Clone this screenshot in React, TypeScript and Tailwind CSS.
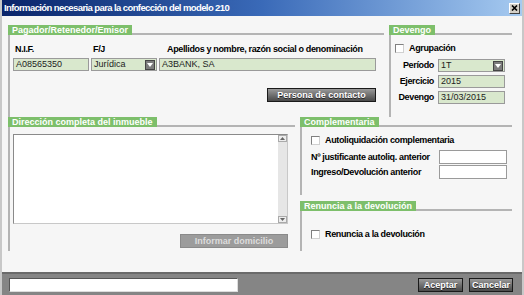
import React from 'react';

const F = "font-['Liberation_Sans',Arial,sans-serif]";
const LBL = 'font-bold text-[9px] tracking-[-0.35px] text-black whitespace-nowrap';

function Tab({ title }: { title: string }) {
  return (
    <div className="flex items-end h-[10px]">
      <div className="h-[10px] px-[4px] bg-[#7dbf6b] text-white font-bold text-[9px] leading-[10px] whitespace-nowrap">{title}</div>
      <div className="flex-1 border-b-2 border-[#b4b4b4]" />
    </div>
  );
}

function Check({ label }: { label: string }) {
  return (
    <div className="flex items-center gap-[5px] h-[12px]">
      <div className="w-[9px] h-[9px] bg-white border border-[#808080] border-r-[#d0d0d0] border-b-[#d0d0d0]" />
      <span className={`${LBL} leading-[10px]`}>{label}</span>
    </div>
  );
}

function Field({ value, w, white }: { value?: string; w?: string; white?: boolean }) {
  return (
    <div className={`${w ?? 'flex-1'} h-[13px] ${white ? 'bg-white' : 'bg-[#d9e8cd]'} border border-[#9a9a9a] px-[2px] font-normal tracking-normal text-[9px] leading-[11px] text-[#222] overflow-hidden whitespace-nowrap`}>
      {value}
    </div>
  );
}

function Combo({ value, w }: { value: string; w: string }) {
  return (
    <div className={`${w} h-[13px] bg-[#d9e8cd] border border-[#9a9a9a] flex items-center`}>
      <span className="flex-1 px-[2px] font-normal tracking-normal text-[9px] leading-[11px] text-[#222]">{value}</span>
      <div className="w-[10px] h-[10px] mr-[1px] bg-[#7c7c7c] border border-[#444] flex items-center justify-center">
        <svg width="6" height="4" viewBox="0 0 6 4"><path d="M0 0h6L3 4z" fill="#fff" /></svg>
      </div>
    </div>
  );
}

function DarkButton({ label, w }: { label: string; w: string }) {
  return (
    <div className={`${w} h-[14px] border border-[#1a1a1a] bg-linear-to-b from-[#9a9a9a] to-[#4a4a4a] flex items-center justify-center text-white font-bold text-[9px] leading-[10px] [text-shadow:0_1px_0_#222]`}>
      {label}
    </div>
  );
}

export default function App() {
  return (
    <div className={`${F} w-[524px] h-[295px] flex flex-col bg-[#f6f6f6] border-l-2 border-r-2 border-[#c8c8c8] overflow-hidden`}>
      {/* title bar */}
      <div className="h-[16px] shrink-0 flex items-center bg-linear-to-r from-[#0a246a] via-[#3a6ab8] to-[#a6caf0] pl-[2px] pr-[2px]">
        <span className="flex-1 text-white font-bold text-[9.5px] tracking-[-0.6px] leading-[12px] whitespace-nowrap">Información necesaria para la confección del modelo 210</span>
        <div className="w-[11px] h-[11px] bg-[#d4d0c8] border border-[#404040] border-t-white border-l-white flex items-center justify-center">
          <svg width="7" height="6" viewBox="0 0 7 6"><path d="M1 0.5l5 5M6 0.5l-5 5" stroke="#000" strokeWidth="1.6" /></svg>
        </div>
      </div>

      {/* body */}
      <div className="flex-1 flex flex-col pt-[9px] pl-[6px]">
        <div className="flex gap-[5px] h-[92px]">
          {/* Pagador */}
          <div className="w-[376px] flex flex-col">
            <Tab title="Pagador/Retenedor/Emisor" />
            <div className="flex-1 border-l-2 border-[#b4b4b4] pl-[3px] pr-[8px] pt-[9px] flex flex-col">
              <div className={`flex h-[10px] leading-[10px] ${LBL}`}>
                <span className="w-[80px] pl-[2px]">N.I.F.</span>
                <span className="w-[74px]">F/J</span>
                <span>Apellidos y nombre, razón social o denominación</span>
              </div>
              <div className="flex gap-[2px] mt-[4px]">
                <Field value="A08565350" w="w-[76px]" />
                <Combo value="Jurídica" w="w-[66px]" />
                <Field value="A3BANK, SA" />
              </div>
              <div className="flex justify-end mt-[17px]">
                <DarkButton label="Persona de contacto" w="w-[109px]" />
              </div>
            </div>
          </div>
          {/* Devengo */}
          <div className="w-[123px] flex flex-col">
            <Tab title="Devengo" />
            <div className="flex-1 border-l-2 border-[#b4b4b4] pl-[4px] pr-[7px] pt-[7px] flex flex-col">
              <Check label="Agrupación" />
              <div className={`grid grid-cols-[43px_1fr] gap-x-[4px] gap-y-[3px] mt-[5px] -ml-[4px] leading-[13px] ${LBL}`}>
                <span className="text-right">Período</span>
                <Combo value="1T" w="w-full" />
                <span className="text-right">Ejercicio</span>
                <Field value="2015" w="w-full" />
                <span className="text-right">Devengo</span>
                <Field value="31/03/2015" w="w-full" />
              </div>
            </div>
          </div>
        </div>

        <div className="flex gap-[5px] h-[134px]">
          {/* Dirección */}
          <div className="w-[287px] flex flex-col">
            <Tab title="Dirección completa del inmueble" />
            <div className="flex-1 border-l-2 border-[#b4b4b4] pl-[3px] pr-[7px] pt-[7px] flex flex-col">
              <div className="h-[90px] bg-white border border-[#8a8a8a] border-r-[#c8c8c8] border-b-[#c8c8c8] flex justify-end">
                <div className="w-[9px] bg-[#e6e6e6] flex flex-col justify-between">
                  <div className="h-[7px] bg-[#ededed] border border-[#aaa] flex items-center justify-center">
                    <svg width="5" height="3" viewBox="0 0 5 3"><path d="M0 3h5L2.5 0z" fill="#666" /></svg>
                  </div>
                  <div className="h-[7px] bg-[#ededed] border border-[#aaa] flex items-center justify-center">
                    <svg width="5" height="3" viewBox="0 0 5 3"><path d="M0 0h5L2.5 3z" fill="#666" /></svg>
                  </div>
                </div>
              </div>
              <div className="flex justify-end mt-[10px]">
                <div className="w-[108px] h-[14px] bg-[#9c9c9c] border border-[#8a8a8a] flex items-center justify-center text-[#dcdcdc] font-bold text-[9px] leading-[10px]">Informar domicilio</div>
              </div>
            </div>
          </div>
          {/* right column */}
          <div className="w-[212px] flex flex-col">
            <Tab title="Complementaria" />
            <div className="h-[68px] border-l-2 border-[#b4b4b4] pl-[9px] pr-[5px] pt-[7px] flex flex-col">
              <Check label="Autoliquidación complementaria" />
              <div className={`grid grid-cols-[1fr_68px] gap-y-[1px] mt-[4px] leading-[14px] ${LBL}`}>
                <span>Nº justificante autoliq. anterior</span>
                <div className="h-[14px] bg-white border border-[#9a9a9a]" />
                <span>Ingreso/Devolución anterior</span>
                <div className="h-[14px] bg-white border border-[#9a9a9a]" />
              </div>
            </div>
            <div className="mt-[6px]">
              <Tab title="Renuncia a la devolución" />
            </div>
            <div className="flex-1 border-l-2 border-[#b4b4b4] pl-[9px] pt-[17px]">
              <Check label="Renuncia a la devolución" />
            </div>
          </div>
        </div>
      </div>

      {/* bottom bar */}
      <div className="h-[23px] shrink-0 bg-[#858585] border-t-2 border-[#6a6a6a] flex items-center pl-[7px] pr-[9px]">
        <div className="w-[229px] h-[14px] bg-white border border-[#555] border-r-[#ddd] border-b-[#ddd]" />
        <div className="flex-1" />
        <div className="flex gap-[6px]">
          <DarkButton label="Aceptar" w="w-[45px]" />
          <DarkButton label="Cancelar" w="w-[44px]" />
        </div>
      </div>
    </div>
  );
}
